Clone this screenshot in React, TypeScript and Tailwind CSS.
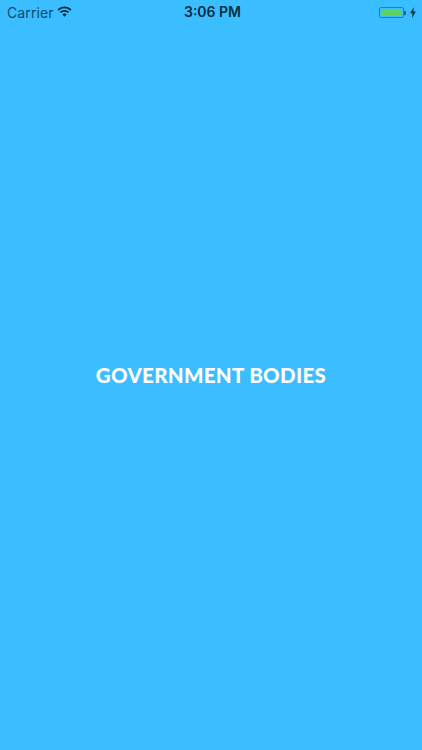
export default function App() {
  return (
    <div className="relative flex h-[750px] w-[422px] flex-col overflow-hidden bg-[#3ABEFF] font-['Liberation_Sans',sans-serif]">
      <div className="flex h-[25px] items-center justify-between pl-[7px] pr-[6px] text-[#0b3b57]">
        <div className="flex w-[140px] items-center gap-[3px]">
          <span className="text-[14px] leading-none tracking-[0.1px] text-[#0d4a6b] font-['Inter',sans-serif]">Carrier</span>
          <svg className="-mt-[2px]" width="15" height="11" viewBox="0 0 16 12" fill="none" stroke="#06283d" strokeWidth="2">
            <path d="M1 4.4C5 0.6 11 0.6 15 4.4" />
            <path d="M3.6 7C6 4.8 10 4.8 12.4 7" />
            <path d="M8 11.6L5.6 9.1C7 7.9 9 7.9 10.4 9.1Z" fill="#06283d" stroke="none" />
          </svg>
        </div>
        <span className="-mt-[1px] ml-[2px] text-[14px] font-semibold leading-none text-[#0c2c42] font-['Inter',sans-serif]">3:06 PM</span>
        <div className="flex w-[140px] items-center justify-end">
          <div className="flex h-[11px] w-[25px] items-center rounded-[2px] border border-[#2a7fa8] p-[1px]">
            <div className="h-full w-full rounded-[1px] bg-[#5FD35F]" />
          </div>
          <div className="h-[4px] w-[1.5px] bg-[#1a6a90]" />
          <svg className="ml-[4px]" width="6" height="11" viewBox="0 0 6 11" fill="#06283d">
            <path d="M3.8 0L0.2 6.3H2.6L2 11L5.8 4.4H3.3Z" />
          </svg>
        </div>
      </div>
      <div className="flex h-[700px] items-center justify-center">
        <span className="text-[20.5px] font-black leading-none tracking-[0.3px] text-white font-['Lato',sans-serif]">GOVERNMENT BODIES</span>
      </div>
    </div>
  );
}
